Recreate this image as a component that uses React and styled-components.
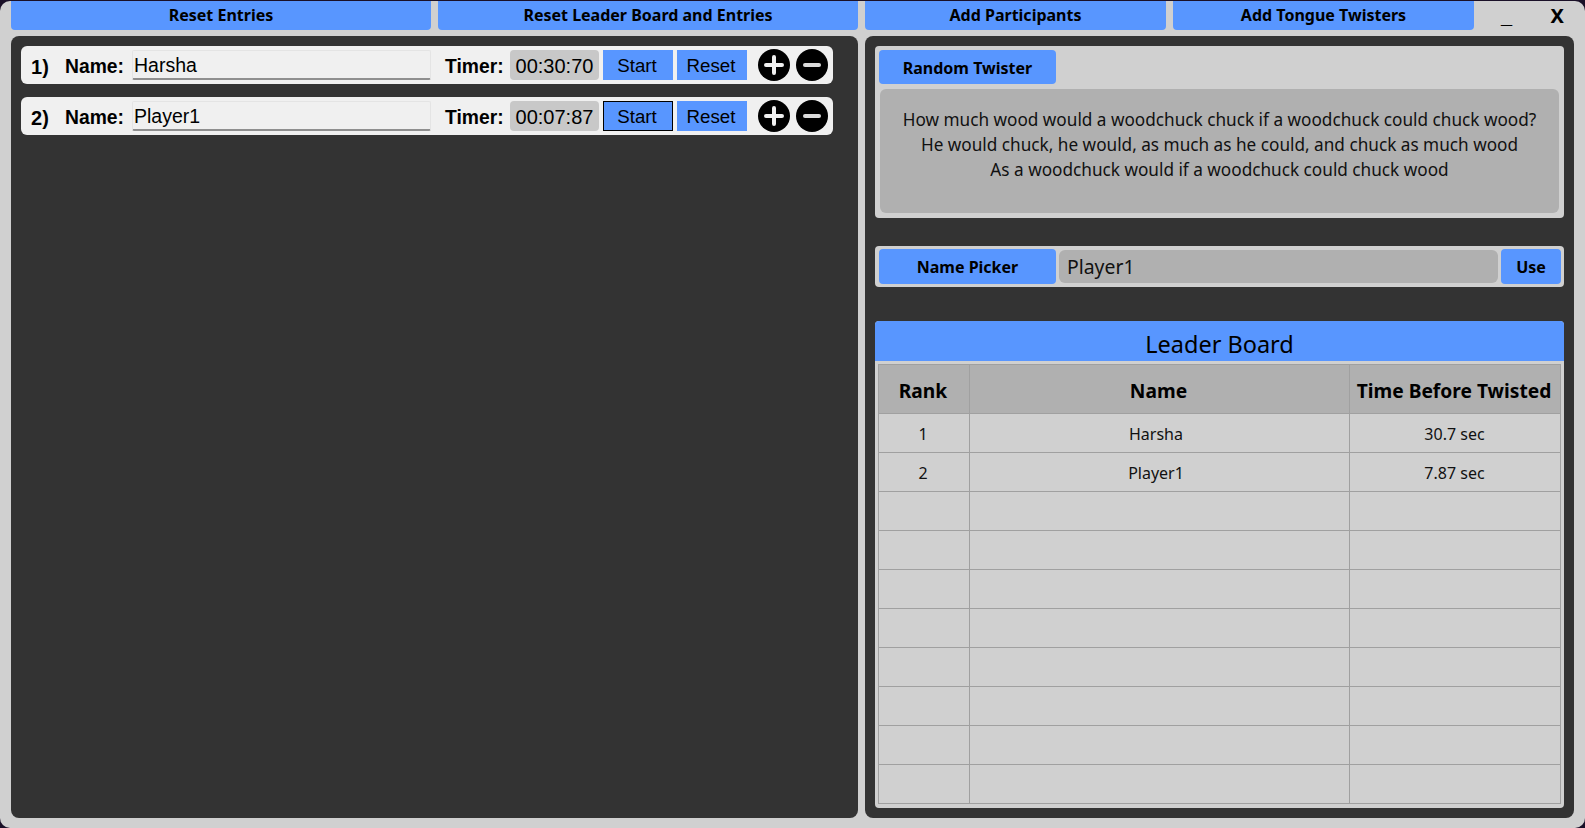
import React from "react";
import styled, { createGlobalStyle } from "styled-components";

const GlobalStyle = createGlobalStyle`
  html, body {
    margin: 0;
    height: 100%;
    background: #1a1028;
  }
  #root {
    height: 100%;
    padding-top: 1px;
  }
  * {
    box-sizing: border-box;
  }
`;

const ui = `"Noto Sans", "Open Sans", sans-serif`;
const blue = "#5896ff";
const grey = "#d0d0d0";
const darkGrey = "#b0b0b0";

const Window = styled.div`
  width: 1585px;
  height: 827px;
  padding: 0 11px 10px 11px;
  background: ${grey};
  border-radius: 10px;
  display: flex;
  flex-direction: column;
  gap: 6px;
  overflow: hidden;
`;

const TopBar = styled.div`
  display: flex;
  height: 29px;
  gap: 7px;
`;

const TopButton = styled.button`
  width: ${(p) => p.$w}px;
  height: 29px;
  border: 0;
  padding: 0 0 2px;
  border-radius: 0 0 4px 4px;
  background: ${blue};
  color: #000;
  font: 700 16px ${ui};
`;

const WinControls = styled.div`
  flex: 1;
  display: flex;
  justify-content: space-between;
  padding: 0 10px 0 20px;
  font: 700 20px ${ui};
`;

const WinControl = styled.span`
  line-height: 30px;
`;

const Minimize = styled(WinControl)`
  font-family: "Liberation Sans", Arial, sans-serif;
`;

const Main = styled.div`
  flex: 1;
  display: flex;
  gap: 7px;
`;

const LeftPanel = styled.div`
  width: 847px;
  background: #333;
  border-radius: 8px;
  padding: 10px;
  display: flex;
  flex-direction: column;
  gap: 13px;
`;

const RightPanel = styled.div`
  width: 709px;
  background: #333;
  border-radius: 8px;
  padding: 10px;
  display: flex;
  flex-direction: column;
`;

const Row = styled.div`
  width: 812px;
  height: 38px;
  background: #f0f0f0;
  border-radius: 6px;
  display: flex;
  align-items: center;
  font-family: "Liberation Sans", Arial, sans-serif;
  color: #000;
`;

const Num = styled.span`
  width: 44px;
  padding: 4px 0 0 10px;
  font-size: 20px;
  font-weight: 700;
`;

const Label = styled.span`
  width: ${(p) => p.$w}px;
  padding-top: 4px;
  font-size: 19.3px;
  font-weight: 700;
`;

const NameInput = styled.div`
  width: 299px;
  height: 30px;
  margin-right: 14px;
  padding-left: 1px;
  background: #f0f0f0;
  border: 1px solid #e4e4e4;
  border-bottom: 2px solid #8f8f8f;
  border-radius: 2px;
  font-size: 19.5px;
  line-height: 29px;
`;

const TimerBox = styled.div`
  width: 89px;
  height: 30px;
  margin-right: 4px;
  padding-top: 1px;
  background: #c8c8c8;
  border-radius: 4px;
  font-size: 20px;
  line-height: 30px;
  text-align: center;
`;

const RowButton = styled.button`
  width: 70px;
  height: 30px;
  margin-right: 4px;
  padding: 1px 2px 0 0;
  background: ${blue};
  border: ${(p) => (p.$focus ? "1px solid #000" : "0")};
  color: #000;
  font: 400 18.7px "Liberation Sans", Arial, sans-serif;
`;

const RoundIcon = styled.svg`
  width: 32px;
  height: 32px;
  margin-left: ${(p) => p.$ml}px;
  flex: none;
`;

const PlusIcon = () => (
  <RoundIcon viewBox="0 0 32 32" $ml={7}>
    <circle cx="16" cy="16" r="16" fill="#000" />
    <path d="M16 8v16M8 16h16" stroke="#f0f0f0" strokeWidth="4" strokeLinecap="round" />
  </RoundIcon>
);

const MinusIcon = () => (
  <RoundIcon viewBox="0 0 32 32" $ml={6}>
    <circle cx="16" cy="16" r="16" fill="#000" />
    <path d="M9 16h14" stroke="#dcdcdc" strokeWidth="4" strokeLinecap="round" />
  </RoundIcon>
);

const TwisterCard = styled.div`
  height: 172px;
  background: ${grey};
  border-radius: 4px;
  padding: 4px 5px 5px 4px;
  display: flex;
  flex-direction: column;
  gap: 5px;
`;

const SideButton = styled.button`
  width: 177px;
  height: ${(p) => p.$h}px;
  flex: none;
  border: 0;
  padding: ${(p) => p.$pt || 0}px 0 0;
  border-radius: 4px;
  background: ${blue};
  color: #000;
  font: 700 16px ${ui};
`;

const TwisterText = styled.div`
  flex: 1;
  margin-left: 1px;
  padding-top: 18px;
  background: ${darkGrey};
  border-radius: 6px;
  text-align: center;
  font: 400 17.2px/25px ${ui};
  color: #111;
`;

const PickerCard = styled.div`
  height: 41px;
  margin-top: 28px;
  padding: 3px;
  padding-left: 4px;
  background: ${grey};
  border-radius: 4px;
  display: flex;
  align-items: center;
  gap: 3px;
`;

const PickerField = styled.div`
  flex: 1;
  height: 33px;
  padding-left: 8px;
  background: ${darkGrey};
  border-radius: 6px;
  font: 400 19.4px/33px ${ui};
  color: #111;
`;

const UseButton = styled.button`
  width: 60px;
  height: 35px;
  flex: none;
  border: 0;
  padding: 0;
  border-radius: 4px;
  background: ${blue};
  color: #000;
  font: 700 16px ${ui};
`;

const Board = styled.div`
  flex: 1;
  margin-top: 34px;
  background: ${grey};
  border-radius: 4px;
  overflow: hidden;
  display: flex;
  flex-direction: column;
`;

const BoardTitle = styled.div`
  height: 40px;
  background: ${blue};
  text-align: center;
  font: 400 23.5px/46px ${ui};
  color: #000;
`;

const Table = styled.table`
  width: 682px;
  margin: 3px 0 0 3px;
  border-collapse: collapse;
  table-layout: fixed;
  color: #111;
  font-family: ${ui};
`;

const HeadCell = styled.th`
  width: ${(p) => p.$w}px;
  height: 49px;
  padding: 2px 2px 0 0;
  background: ${darkGrey};
  border: 1px solid #a0a0a0;
  font-size: 19.2px;
  font-weight: 700;
  color: #000;
`;

const Cell = styled.td`
  height: 39px;
  padding: 2px ${(p) => p.$pr || 0}px 0 0;
  border: 1px solid #a0a0a0;
  text-align: center;
  font-size: 16px;
`;

const entries = [
  { name: "Harsha", time: "00:30:70" },
  { name: "Player1", time: "00:07:87", focus: true },
];

const scores = [
  ["1", "Harsha", "30.7 sec"],
  ["2", "Player1", "7.87 sec"],
  ...Array.from({ length: 8 }, () => ["", "", ""]),
];

export default function App() {
  return (
    <>
      <GlobalStyle />
      <Window>
        <TopBar>
          <TopButton $w={420}>Reset Entries</TopButton>
          <TopButton $w={420}>Reset Leader Board and Entries</TopButton>
          <TopButton $w={301}>Add Participants</TopButton>
          <TopButton $w={301}>Add Tongue Twisters</TopButton>
          <WinControls>
            <Minimize>_</Minimize>
            <WinControl>X</WinControl>
          </WinControls>
        </TopBar>
        <Main>
          <LeftPanel>
            {entries.map((e, i) => (
              <Row key={e.name}>
                <Num>{i + 1})</Num>
                <Label $w={67}>Name:</Label>
                <NameInput>{e.name}</NameInput>
                <Label $w={65}>Timer:</Label>
                <TimerBox>{e.time}</TimerBox>
                <RowButton $focus={e.focus}>Start</RowButton>
                <RowButton>Reset</RowButton>
                <PlusIcon />
                <MinusIcon />
              </Row>
            ))}
          </LeftPanel>
          <RightPanel>
            <TwisterCard>
              <SideButton $h={34} $pt={2}>Random Twister</SideButton>
              <TwisterText>
                How much wood would a woodchuck chuck if a woodchuck could chuck wood?
                <br />
                He would chuck, he would, as much as he could, and chuck as much wood
                <br />
                As a woodchuck would if a woodchuck could chuck wood
              </TwisterText>
            </TwisterCard>
            <PickerCard>
              <SideButton $h={35}>Name Picker</SideButton>
              <PickerField>Player1</PickerField>
              <UseButton>Use</UseButton>
            </PickerCard>
            <Board>
              <BoardTitle>Leader Board</BoardTitle>
              <Table>
                <thead>
                  <tr>
                    <HeadCell $w={91}>Rank</HeadCell>
                    <HeadCell $w={380}>Name</HeadCell>
                    <HeadCell $w={211}>Time Before Twisted</HeadCell>
                  </tr>
                </thead>
                <tbody>
                  {scores.map((s, i) => (
                    <tr key={i}>
                      <Cell $pr={2}>{s[0]}</Cell>
                      <Cell $pr={7}>{s[1]}</Cell>
                      <Cell $pr={1}>{s[2]}</Cell>
                    </tr>
                  ))}
                </tbody>
              </Table>
            </Board>
          </RightPanel>
        </Main>
      </Window>
    </>
  );
}
